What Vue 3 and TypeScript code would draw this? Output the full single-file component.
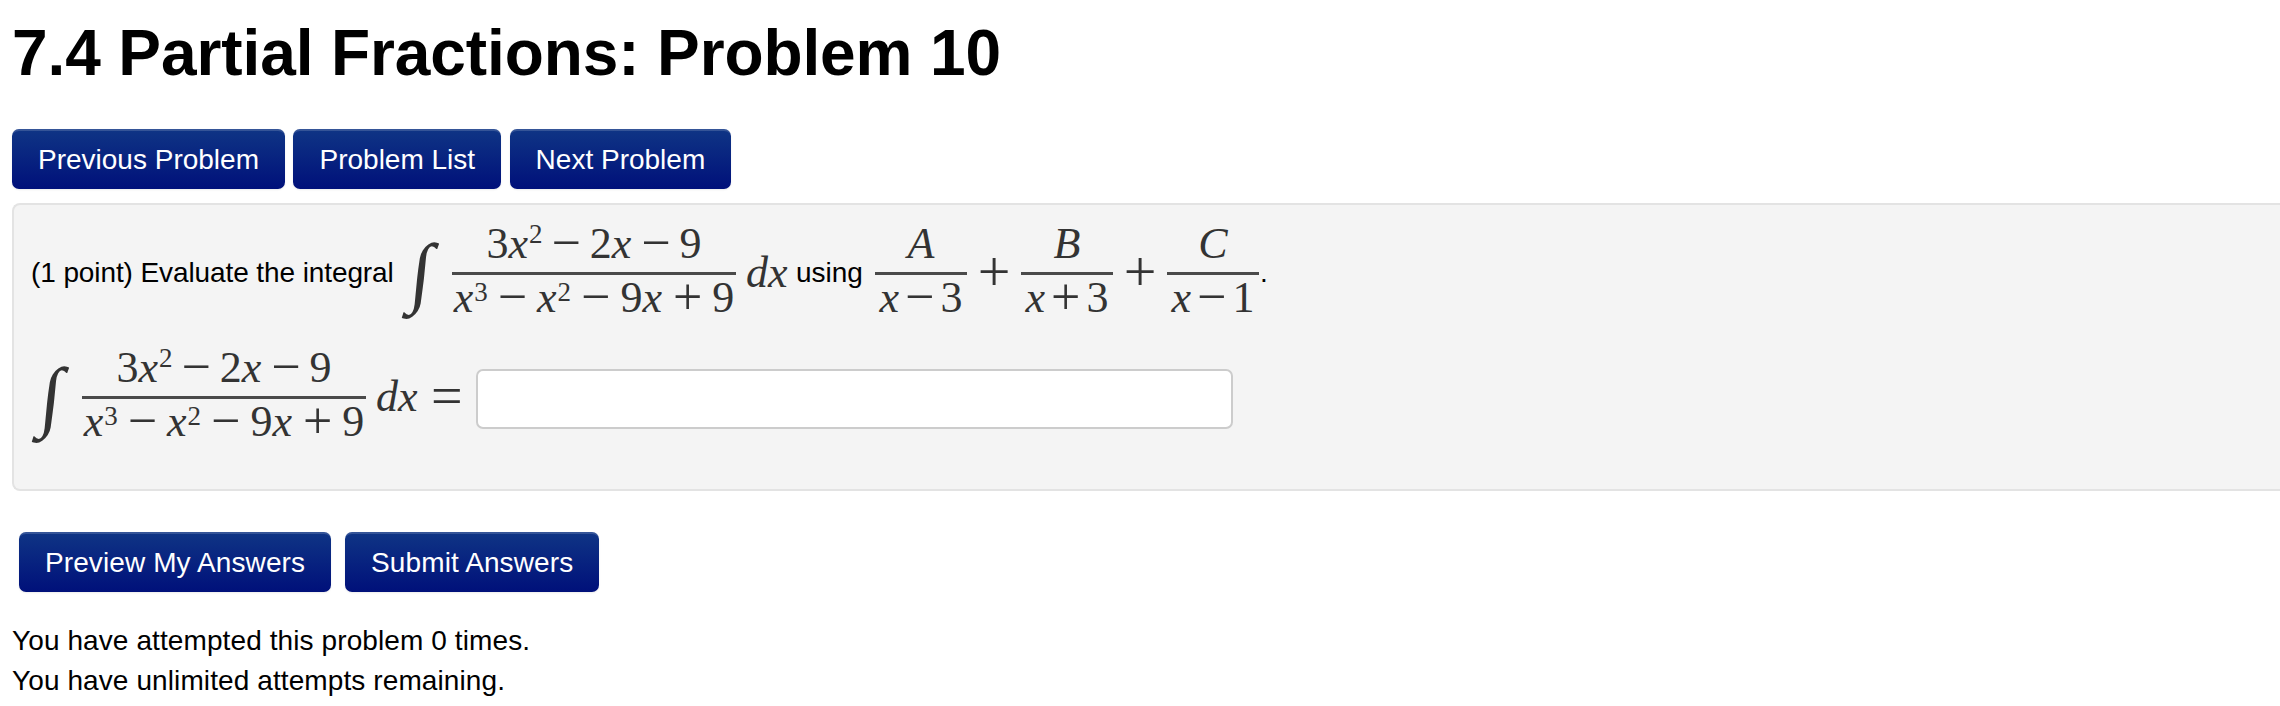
<script setup lang="ts">
const navButtons: string[] = ['Previous Problem', 'Problem List', 'Next Problem']
const actionButtons: string[] = ['Preview My Answers', 'Submit Answers']
</script>

<template>
  <div class="page">
    <h1 class="title">7.4 Partial Fractions: Problem 10</h1>
    <div class="nav">
      <button v-for="b in navButtons" :key="b" class="btn" type="button">{{ b }}</button>
    </div>
    <div class="well">
      <div class="row first">
        <span class="txt lead">(1 point) Evaluate the integral</span>
        <span class="int">∫</span>
        <span class="frac big">
          <span class="num">3<i>x</i><sup>2</sup><b>−</b>2<i>x</i><b>−</b>9</span>
          <span class="den"><i>x</i><sup>3</sup><b>−</b><i>x</i><sup>2</sup><b>−</b>9<i>x</i><b>+</b>9</span>
        </span>
        <span class="dx"><i>dx</i></span>
        <span class="txt using">using</span>
        <span class="frac small">
          <span class="num"><i>A</i></span>
          <span class="den"><i>x</i><b>−</b>3</span>
        </span>
        <span class="plus">+</span>
        <span class="frac small">
          <span class="num"><i>B</i></span>
          <span class="den"><i>x</i><b>+</b>3</span>
        </span>
        <span class="plus">+</span>
        <span class="frac small">
          <span class="num"><i>C</i></span>
          <span class="den"><i>x</i><b>−</b>1</span>
        </span>
        <span class="txt dot">.</span>
      </div>
      <div class="row second">
        <span class="int">∫</span>
        <span class="frac big">
          <span class="num">3<i>x</i><sup>2</sup><b>−</b>2<i>x</i><b>−</b>9</span>
          <span class="den"><i>x</i><sup>3</sup><b>−</b><i>x</i><sup>2</sup><b>−</b>9<i>x</i><b>+</b>9</span>
        </span>
        <span class="dx"><i>dx</i></span>
        <span class="eq">=</span>
        <input class="answer" type="text" />
      </div>
    </div>
    <div class="actions">
      <button v-for="b in actionButtons" :key="b" class="btn wide" type="button">{{ b }}</button>
    </div>
    <p class="info">You have attempted this problem 0 times.<br />You have unlimited attempts remaining.</p>
  </div>
</template>

<style scoped>
.page {
  width: 2280px;
  height: 706px;
  overflow: hidden;
  background: #fff;
  color: #000;
  font-family: "Liberation Sans", Arial, sans-serif;
  font-size: 28px;
  line-height: 40px;
}
.title {
  margin: 0;
  padding: 13px 0 0 12px;
  font-size: 64px;
  line-height: 80px;
  font-weight: 700;
  letter-spacing: -0.1px;
}
.nav {
  display: flex;
  gap: 8.5px;
  margin: 36px 0 0 12px;
}
.btn {
  height: 60px;
  padding: 2px 26px 0;
  border: 0;
  border-radius: 7px;
  background: linear-gradient(#0f3585, #00107a);
  box-shadow: inset 0 3px 0 -1px rgba(255, 255, 255, 0.16), 0 1px 2px rgba(0, 0, 0, 0.08);
  color: #fff;
  font-family: inherit;
  font-size: 28px;
  line-height: 40px;
  white-space: nowrap;
}
.wide {
  letter-spacing: 0.1px;
}
.well {
  margin: 14px 0 0 12px;
  height: 288px;
  box-sizing: border-box;
  padding: 14px 0 0 17px;
  border: 2px solid #e3e3e3;
  border-right: 0;
  border-radius: 8px 0 0 8px;
  background: #f4f4f4;
}
.row {
  display: flex;
  align-items: center;
  height: 106px;
  font-family: "Liberation Serif", "Times New Roman", serif;
  color: #333;
}
.second {
  margin-top: 18px;
}
.txt {
  font-family: "Liberation Sans", Arial, sans-serif;
  font-size: 28px;
  line-height: 40px;
  color: #000;
  white-space: nowrap;
  margin-top: 2px;
}
.lead {
  width: 372px;
  letter-spacing: -0.1px;
}
.int {
  width: 37px;
  margin-right: 12px;
  font-size: 78px;
  line-height: 106px;
  text-align: center;
  transform: skewX(-6deg);
}
.second .int {
  margin-left: 2px;
}
.frac {
  display: inline-flex;
  flex-direction: column;
  text-align: center;
  font-size: 44px;
  white-space: nowrap;
}
.num {
  height: 52px;
  line-height: 46px;
  padding-bottom: 6px;
  box-sizing: border-box;
}
.den {
  height: 52px;
  line-height: 46px;
  border-top: 3px solid #4a4a4a;
  margin-top: -1px;
  box-sizing: border-box;
}
.frac i {
  font-style: italic;
  letter-spacing: 1px;
}
.frac b {
  font-size: 52px;
  line-height: 0;
  font-weight: 400;
  vertical-align: -2px;
}
.num b {
  margin: 0 9px;
}
.den b {
  margin: 0 10px;
}
.small .den b {
  margin: 0 6px;
}
.small i {
  letter-spacing: 0;
}
.frac sup {
  font-size: 27px;
  line-height: 0;
}
.num sup {
  vertical-align: 15px;
}
.den sup {
  vertical-align: 11px;
}
.big {
  width: 284px;
}
.small {
  width: 92px;
}
.dx {
  margin-left: 10px;
  font-size: 44px;
  line-height: 46px;
  width: 40px;
  margin-top: 2px;
}
.using {
  margin-left: 10px;
  width: 79px;
}
.plus {
  width: 54px;
  text-align: center;
  font-size: 58px;
  line-height: 46px;
}
.dot {
  margin-left: 1px;
}
.eq {
  margin: 0 13px 0 15px;
  font-size: 56px;
  line-height: 46px;
}
.answer {
  width: 757px;
  height: 60px;
  box-sizing: border-box;
  margin-top: 6px;
  border: 2px solid #ccc;
  border-radius: 7px;
  background: #fff;
}
.actions {
  display: flex;
  gap: 14px;
  margin: 41px 0 0 19px;
}
.info {
  margin: 29px 0 0 12px;
  letter-spacing: 0.1px;
}
</style>
